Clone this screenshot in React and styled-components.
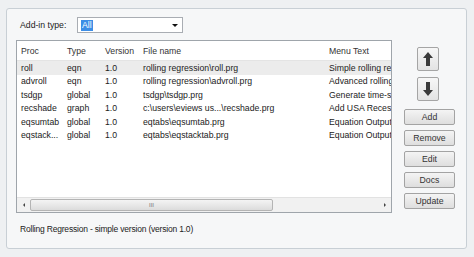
import React from 'react'
import styled, { createGlobalStyle } from 'styled-components'

const GlobalStyle = createGlobalStyle`
    html, body {
        margin: 0;
        padding: 0;
        background: #eef0f2;
    }
    body {
        font-family: "Liberation Sans", Arial, sans-serif;
        font-size: 8.7px;
        color: #222;
    }
`

const Window = styled.div`
    width: 474px;
    height: 257px;
    box-sizing: border-box;
    padding: 8px 7px 8px 6px;
`

const Panel = styled.div`
    height: 100%;
    box-sizing: border-box;
    background: #f6f7f8;
    border: 1px solid #c8cfd5;
    border-radius: 3px;
    padding: 8px 11px 0 9px;
    display: flex;
    flex-direction: column;
`

const TypeRow = styled.div`
    display: flex;
    align-items: center;
    height: 16px;
`

const Label = styled.span`
    width: 57px;
    padding-left: 4px;
`

const Select = styled.div`
    width: 106px;
    height: 16px;
    box-sizing: border-box;
    background: #fff;
    border: 1px solid #a9adb3;
    display: flex;
    align-items: center;
    justify-content: space-between;
    padding: 0 4px 0 3px;
`

const Selected = styled.span`
    background: #3d8ee6;
    color: #fff;
    padding: 0 1px;
    line-height: 11px;
`

const Caret = styled.span`
    width: 0;
    height: 0;
    border-left: 3px solid transparent;
    border-right: 3px solid transparent;
    border-top: 3px solid #111;
`

const Body = styled.div`
    display: flex;
    margin-top: 7px;
    gap: 12px;
`

const ListBox = styled.div`
    width: 376px;
    height: 173px;
    box-sizing: border-box;
    background: #fff;
    border: 1px solid #9fa5ab;
    display: flex;
    flex-direction: column;
    overflow: hidden;
`

const Rows = styled.div`
    flex: 1;
    overflow: hidden;
`

const Row = styled.div`
    display: grid;
    grid-template-columns: 46px 38px 38px 186px 120px;
    height: ${p => (p.$header ? '19px' : '13.5px')};
    align-items: center;
    background: ${p => (p.$selected ? '#ececec' : 'transparent')};
    border-bottom: ${p => (p.$header ? '1px solid #e4e4e4' : 'none')};
    color: ${p => (p.$header ? '#333' : '#222')};
    white-space: nowrap;
`

const Cell = styled.span`
    padding-left: 4px;
    overflow: hidden;
`

const HScroll = styled.div`
    height: 14px;
    display: flex;
    align-items: center;
    background: #f1f1f1;
    border-top: 1px solid #e2e2e2;
`

const ScrollArrow = styled.span`
    width: 13px;
    display: flex;
    justify-content: center;
    &::before {
        content: '';
        width: 0;
        height: 0;
        border-top: 2px solid transparent;
        border-bottom: 2px solid transparent;
        ${p => (p.$right ? 'border-left: 2px solid #444;' : 'border-right: 2px solid #444;')}
    }
`

const Track = styled.div`
    flex: 1;
    height: 12px;
    display: flex;
`

const Thumb = styled.div`
    width: 243px;
    height: 12px;
    box-sizing: border-box;
    border: 1px solid #b4b4b4;
    border-radius: 2px;
    background: linear-gradient(#f4f4f4, #dcdcdc);
    display: flex;
    align-items: center;
    justify-content: center;
    font-size: 6px;
    color: #777;
`

const Buttons = styled.div`
    width: 51px;
    display: flex;
    flex-direction: column;
    align-items: center;
`

const ArrowButton = styled.button`
    width: 22px;
    height: 24px;
    margin: ${p => (p.$first ? '7px 0 0 -4px' : '6px 0 0 -4px')};
    padding: 0;
    border: 1px solid #a5a5a5;
    border-radius: 2px;
    background: linear-gradient(#f7f7f7, #e3e3e3);
    display: flex;
    align-items: center;
    justify-content: center;
`

const Button = styled.button`
    width: 51px;
    height: 16px;
    margin-top: ${p => (p.$first ? '8px' : '5px')};
    padding: 0;
    border: 1px solid #a3a3a3;
    border-radius: 2px;
    background: linear-gradient(#f4f4f4, #dedede);
    font-family: "Liberation Sans", Arial, sans-serif;
    font-size: 8.7px;
    color: #333;
`

const Status = styled.div`
    margin-top: 11px;
    padding-left: 4px;
    font-size: 8.5px;
    letter-spacing: -0.2px;
`

const rows = [
    ['roll', 'eqn', '1.0', 'rolling regression\\roll.prg', 'Simple rolling regression'],
    ['advroll', 'eqn', '1.0', 'rolling regression\\advroll.prg', 'Advanced rolling regression'],
    ['tsdgp', 'global', '1.0', 'tsdgp\\tsdgp.prg', 'Generate time-series'],
    ['recshade', 'graph', '1.0', 'c:\\users\\eviews us...\\recshade.prg', 'Add USA Recession shading'],
    ['eqsumtab', 'global', '1.0', 'eqtabs\\eqsumtab.prg', 'Equation Output Table'],
    ['eqstack...', 'global', '1.0', 'eqtabs\\eqstacktab.prg', 'Equation Output Stacked'],
]

const Arrow = ({ down }) => (
    <svg width="10" height="14" viewBox="0 0 10 14" style={{ transform: down ? 'rotate(180deg)' : 'none' }}>
        <path d="M5 0 L10 6 L7 6 L7 14 L3 14 L3 6 L0 6 Z" fill="#3a3a3a" />
    </svg>
)

const App = () => (
    <>
        <GlobalStyle />
        <Window>
            <Panel>
                <TypeRow>
                    <Label>Add-in type:</Label>
                    <Select>
                        <Selected>All</Selected>
                        <Caret />
                    </Select>
                </TypeRow>
                <Body>
                    <ListBox>
                        <Rows>
                            <Row $header>
                                <Cell>Proc</Cell>
                                <Cell>Type</Cell>
                                <Cell>Version</Cell>
                                <Cell>File name</Cell>
                                <Cell>Menu Text</Cell>
                            </Row>
                            {rows.map((r, i) => (
                                <Row key={r[0]} $selected={i === 0}>
                                    {r.map((c, j) => <Cell key={j}>{c}</Cell>)}
                                </Row>
                            ))}
                        </Rows>
                        <HScroll>
                            <ScrollArrow />
                            <Track>
                                <Thumb>III</Thumb>
                            </Track>
                            <ScrollArrow $right />
                        </HScroll>
                    </ListBox>
                    <Buttons>
                        <ArrowButton $first><Arrow /></ArrowButton>
                        <ArrowButton><Arrow down /></ArrowButton>
                        <Button $first>Add</Button>
                        <Button>Remove</Button>
                        <Button>Edit</Button>
                        <Button>Docs</Button>
                        <Button>Update</Button>
                    </Buttons>
                </Body>
                <Status>Rolling Regression - simple version (version 1.0)</Status>
            </Panel>
        </Window>
    </>
)

export default App
